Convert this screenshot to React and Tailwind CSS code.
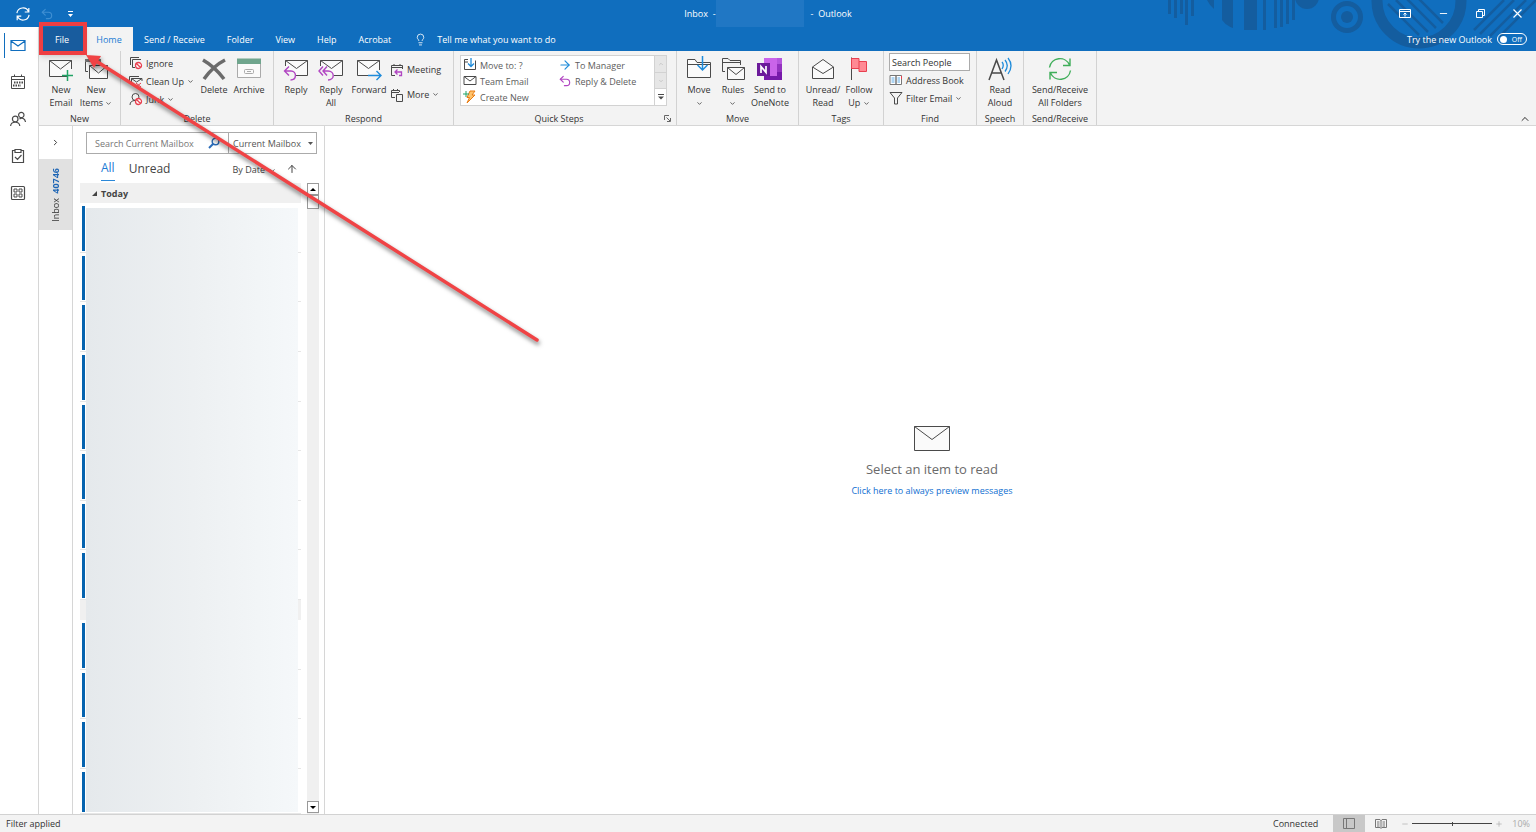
import { ArrowRight, ArrowUp, ChevronDown, ChevronRight, ChevronUp, Lightbulb, Minus, Plus, Undo2 } from 'lucide-react'

function Svg({ w, h, className = '', children }) {
  return (
    <svg width={w} height={h} viewBox={`0 0 ${w} ${h}`} fill="none" stroke="#4a4a4a" className={`shrink-0 ${className}`} aria-hidden="true">
      {children}
    </svg>
  )
}

function SyncIcon({ size, color, width = 1.3 }) {
  return (
    <svg width={size} height={size} viewBox="0 0 24 24" fill="none" stroke={color} strokeWidth={width} aria-hidden="true">
      <path d="M1.5 10.500A10.500 10.500 0 0 1 21.500 8M22 1.500V8.500H15M22.500 13.500A10.500 10.500 0 0 1 2.500 16M2 22.500V15.500H9" />
    </svg>
  )
}

const newEmailIcon = (
  <Svg w={26} h={26}>
    <path d="M19 20.500H1.500V4.500H23.500V13" fill="#fafafa" />
    <path d="M1.500 4.500L12.500 13L23.500 4.500" />
    <path d="M19.500 14V25M14 19.500H25" stroke="#21a366" strokeWidth="1.500" />
  </Svg>
)

const newItemsIcon = (
  <Svg w={26} h={26}>
    <path d="M5 15.500H2.500V3.500H17.500V9" />
    <path d="M2 3H18V6H2Z" fill="#777" stroke="none" />
    <path d="M6.500 9.500H24.500V22.500H6.500Z" fill="#fafafa" />
    <path d="M6.500 9.500L15.500 17L24.500 9.500" />
  </Svg>
)

const deleteIcon = (
  <Svg w={26} h={26}>
    <path d="M2 4C9 8 17 15 23 23M24 4C16 8 8 16 3 23" stroke="#6b6b6b" strokeWidth="3.500" />
  </Svg>
)

const archiveIcon = (
  <Svg w={26} h={26}>
    <path d="M1.500 8V21.500H24.500V8" fill="#fafafa" stroke="#aaa" />
    <path d="M1 2.500H25V8H1Z" fill="#6fa58d" stroke="none" />
    <rect x="8.500" y="13.500" width="9" height="4" rx="1" stroke="#aaa" />
    <path d="M11 15.500H15" stroke="#aaa" />
  </Svg>
)

const replyIcon = (
  <Svg w={26} h={26}>
    <path d="M2.500 10V4.500H24.500V19.500H13" fill="#fafafa" />
    <path d="M2.500 4.500L13.500 12.500L24.500 4.500" />
    <path d="M6 10.500L1.500 15L6 19.500M2 15H8C14 15 14 24 7.500 24" stroke="#b146c2" strokeWidth="1.400" />
  </Svg>
)

const replyAllIcon = (
  <Svg w={26} h={26}>
    <path d="M2.500 10V4.500H24.500V19.500H16" fill="#fafafa" />
    <path d="M2.500 4.500L13.500 12.500L24.500 4.500" />
    <path d="M5 10.500L1 15L5 19.500M9 10.500L5 15L9 19.500M5 15H10C17 15 17 24 10 24" stroke="#b146c2" strokeWidth="1.400" />
  </Svg>
)

const forwardIcon = (
  <Svg w={26} h={26}>
    <path d="M12 19.500H1.500V4.500H23.500V14" fill="#fafafa" />
    <path d="M1.500 4.500L12.500 12.500L23.500 4.500" />
    <path d="M12 19.500H25M20.500 15L25 19.500L20.500 24" stroke="#1e8bda" strokeWidth="1.400" />
  </Svg>
)

const moveIcon = (
  <Svg w={26} h={26}>
    <path d="M1.500 21.500V3.500H9L11 6.500H24.500V21.500H1.500ZM1.500 8.500H24" fill="#fafafa" />
    <path d="M16.500 0V14M11.500 9L16.500 14L21.500 9" stroke="#1e8bda" strokeWidth="1.500" />
  </Svg>
)

const rulesIcon = (
  <Svg w={26} h={26}>
    <path d="M5 15.500H2.500V2.500H8L10 4.500H20.500V9M2.500 6.500H20" />
    <path d="M7.500 11.500H24.500V23.500H7.500Z" fill="#fafafa" />
    <path d="M7.500 11.500L16 18.500L24.500 11.500" />
  </Svg>
)

const oneNoteIcon = (
  <Svg w={26} h={26}>
    <path d="M7 2H25V24H7Z" fill="#ca64ea" stroke="none" />
    <path d="M20 2H25V8H20Z" fill="#b556dd" stroke="none" />
    <path d="M20 8H25V16H20Z" fill="#9332bf" stroke="none" />
    <path d="M20 16H25V24H7V20H20Z" fill="#7719aa" stroke="none" />
    <path d="M0 7H13V20H0Z" fill="#6b1a9a" stroke="none" />
    <path d="M4 17V10.500L9 16.500V10" stroke="#fff" strokeWidth="1.700" />
  </Svg>
)

const unreadIcon = (
  <Svg w={26} h={26}>
    <path d="M2.500 11L13 3.500L23.500 11V22.500H2.500Z" fill="#fafafa" />
    <path d="M2.500 11L13 17.500L23.500 11" />
  </Svg>
)

const flagIcon = (
  <Svg w={26} h={26}>
    <path d="M5.500 24V1.500" />
    <path d="M5.500 2.500H13V5.500H20.500V15.500H13V12.500H5.500Z" fill="#ff8a94" stroke="#e8404f" />
    <path d="M13 5.500V12.500" stroke="#e8404f" />
  </Svg>
)

const readAloudIcon = (
  <Svg w={26} h={26}>
    <path d="M2 24L9.500 4L17 24M4.500 17H14.500" strokeWidth="1.500" />
    <path d="M15 6Q17.500 9 15 13M18 4Q22.500 9.500 18 15.500M21 2Q27 9.500 21 18" stroke="#1e8bda" strokeWidth="1.300" />
  </Svg>
)

const block = <path d="M12.500 9.500A3 3 0 1 1 6.500 9.500A3 3 0 1 1 12.500 9.500M7.500 7.500L11.500 11.500" stroke="#e8404f" strokeWidth="1.300" fill="#fff" />

const ignoreIcon = (
  <Svg w={14} h={14}>
    <path d="M6 11.500H3.500V3.500H12M1.500 9V1.500H10" />
    {block}
  </Svg>
)

const cleanUpIcon = (
  <Svg w={14} h={14}>
    <path d="M5 10.500H2.500V4.500H13V7M2.500 4.500L7.500 8L13 4.500M.5 8V2.500H10" />
    <path d="M7 9L12 13M12 9L7 13" stroke="#e8404f" />
  </Svg>
)

const junkIcon = (
  <Svg w={14} h={14}>
    <path d="M1 13C1 10 3 8.500 6 8.500M10 5A3.500 3.500 0 1 1 3 5A3.500 3.500 0 1 1 10 5" />
    {block}
  </Svg>
)

const meetingIcon = (
  <Svg w={14} h={14}>
    <path d="M5 12.500H1.500V2.500H12.500V6M1.500 4.500H12.500M4 1V3M10 1V3" />
    <path d="M7.500 6.500L5 9L7.500 11.500M5.500 9H11.500V12.500H9" stroke="#b146c2" strokeWidth="1.300" />
  </Svg>
)

const moreIcon = (
  <Svg w={14} h={14}>
    <path d="M5 9.500H1.500V2.500H9.500V4M1.500 4.500H9M3.500 1V3M7.500 1V3" />
    <path d="M6.500 6.500H12.500V13.500H6.500Z" />
  </Svg>
)

const smallMail = (
  <Svg w={14} h={12}>
    <path d="M1 1.500H13V9.500H1ZM1 1.500L7 6L13 1.500" />
  </Svg>
)

const smallMove = (
  <Svg w={14} h={14}>
    <path d="M5 1.500H1.500V11.500H12.500V2.500M1.500 4H5" />
    <path d="M8 0V8M5 5.500L8 8.500L11 5.500" stroke="#1e8bda" strokeWidth="1.300" />
  </Svg>
)

const createNewIcon = (
  <Svg w={14} h={14}>
    <path d="M7 1H12L9 5H12L4 13L6.500 7.500H4Z" fill="#ffc36b" stroke="#e87b13" />
    <path d="M3 1V7M0 4H6" stroke="#21a366" />
  </Svg>
)

const addressIcon = (
  <Svg w={14} h={14}>
    <path d="M1 2.500H7V11.500H1ZM7 2.500H12.500V11.500H7Z" fill="#fff" stroke="#777" />
    <path d="M2.500 5H5.500M2.500 7H5.500M2.500 9H5.500M8.500 5H11M8.500 7H11M8.500 9H11" stroke="#5aa9e6" />
    <path d="M12.500 3V6" stroke="#e8404f" />
  </Svg>
)

const filterIcon = (
  <Svg w={14} h={14}>
    <path d="M1 1.500H13L8.500 7V13H5.500V7Z" />
  </Svg>
)

const railItems = [
  {
    label: 'Mail',
    icon: (
      <Svg w={16} h={16}>
        <path d="M1 3.500H15V13.500H1ZM1 4L8 9L15 4" stroke="#106ebe" strokeWidth="1.200" />
      </Svg>
    ),
  },
  {
    label: 'Calendar',
    icon: (
      <Svg w={16} h={16}>
        <path d="M1.500 2.500H14.500V14.500H1.500ZM1.500 5.500H14.500M4.500 .5V3M11.500 .5V3" />
        <path d="M4 8.500H13M3 11.500H11" strokeWidth="2" strokeDasharray="1.500 1" />
      </Svg>
    ),
  },
  {
    label: 'People',
    icon: (
      <Svg w={16} h={16}>
        <path d="M8 8A2.800 2.800 0 1 1 2.400 8A2.800 2.800 0 1 1 8 8M.6 15C1 10 9.400 10 9.800 15M14 4A2.700 2.700 0 1 1 8.600 4A2.700 2.700 0 1 1 14 4M9.500 8C12 6 15 7.500 15.500 11" strokeWidth="1.200" />
      </Svg>
    ),
  },
  {
    label: 'Tasks',
    icon: (
      <Svg w={16} h={16}>
        <path d="M5 2.500H2.500V14.500H13.500V2.500H11M5 1.500H11V4.500H5ZM5 9L7.500 11.500L11.500 7" strokeWidth="1.200" />
      </Svg>
    ),
  },
  {
    label: 'More apps',
    icon: (
      <Svg w={16} h={16}>
        <rect x="1.500" y="1.500" width="13" height="13" rx="1" strokeWidth="1.200" />
        <path d="M4 4H7V7H4ZM9 4H12V7H9ZM4 9H7V12H4ZM9 9H12V12H9Z" />
      </Svg>
    ),
  },
]

const tabs = ['Send / Receive', 'Folder', 'View', 'Help', 'Acrobat']

function Chevron() {
  return <ChevronDown size={7} strokeWidth={2.5} className="inline-block shrink-0" />
}

function Group({ label, className, launcher, children }) {
  return (
    <section className={`flex shrink-0 flex-col border-r border-[#d2d2d2] ${className}`}>
      <div className="flex flex-1">{children}</div>
      <div className="flex h-[14px] items-center">
        <h2 className="flex-1 text-center">{label}</h2>
        {launcher}
      </div>
    </section>
  )
}

function BigButton({ icon, line1, line2, menu, className }) {
  return (
    <button className={`flex flex-col items-center gap-px pt-[5px] ${className}`}>
      {icon}
      <span className="whitespace-nowrap">
        {line1}
        <br />
        {line2} {menu && <Chevron />}
      </span>
    </button>
  )
}

function SmallButton({ icon, label, menu, className = 'h-[18px]' }) {
  return (
    <button className={`flex items-center gap-[3px] whitespace-nowrap ${className}`}>
      {icon}
      {label}
      {menu && <Chevron />}
    </button>
  )
}

function Ribbon() {
  return (
    <div className="flex h-[75px] border-b border-[#d6d6d6] bg-[#f3f3f3]">
      <Group label="New" className="w-[82px]">
        <BigButton icon={newEmailIcon} line1="New" line2="Email" className="ml-1 w-9" />
        <BigButton icon={newItemsIcon} line1="New" line2="Items" menu className="w-[34px]" />
      </Group>
      <Group label="Delete" className="w-[153px]">
        <div className="flex w-[76px] flex-col pt-[3px] pl-2">
          <SmallButton icon={ignoreIcon} label="Ignore" />
          <SmallButton icon={cleanUpIcon} label="Clean Up" menu />
          <SmallButton icon={junkIcon} label="Junk" menu />
        </div>
        <BigButton icon={deleteIcon} line1="Delete" className="w-[34px]" />
        <BigButton icon={archiveIcon} line1="Archive" className="w-9" />
      </Group>
      <Group label="Respond" className="w-[180px]">
        <BigButton icon={replyIcon} line1="Reply" className="ml-1 w-9" />
        <BigButton icon={replyAllIcon} line1="Reply" line2="All" className="w-[34px]" />
        <BigButton icon={forwardIcon} line1="Forward" className="w-[42px]" />
        <div className="flex flex-col pt-[6px]">
          <SmallButton icon={meetingIcon} label="Meeting" className="h-[25px]" />
          <SmallButton icon={moreIcon} label="More" menu className="h-[25px]" />
        </div>
      </Group>
      <Group
        label="Quick Steps"
        className="w-[223px]"
        launcher={
          <button aria-label="Quick Steps settings" className="w-3">
            <Svg w={7} h={7}>
              <path d="M.5 5V.5H5M2.500 2.500L6 6M6.500 3V6.500H3" stroke="#666" />
            </Svg>
          </button>
        }
      >
        <div className="mt-1 ml-[6px] flex h-[51px] w-[207px] border border-[#d2d2d2] bg-white text-[#5c5c5c]">
          <div className="flex w-[97px] flex-col pt-px pl-0.5">
            <SmallButton icon={smallMove} label="Move to: ?" className="h-4" />
            <SmallButton icon={smallMail} label="Team Email" className="h-4" />
            <SmallButton icon={createNewIcon} label="Create New" className="h-4" />
          </div>
          <div className="flex flex-1 flex-col pt-px">
            <SmallButton icon={<ArrowRight size={14} strokeWidth={2} color="#1e8bda" />} label="To Manager" className="h-4" />
            <SmallButton icon={<Undo2 size={14} strokeWidth={2} color="#b146c2" />} label="Reply & Delete" className="h-4" />
          </div>
          <div className="flex w-3 flex-col border-l border-[#d2d2d2]">
            <button aria-label="Scroll up" className="flex flex-1 items-center justify-center border-b border-[#d2d2d2] bg-[#e6e6e6] text-[#aaa]"><ChevronUp size={6} /></button>
            <button aria-label="Scroll down" className="flex flex-1 items-center justify-center border-b border-[#d2d2d2] bg-[#e6e6e6] text-[#aaa]"><ChevronDown size={6} /></button>
            <button aria-label="More steps" className="flex flex-1 items-center justify-center">
              <Svg w={6} h={6}><path d="M0 .5H6" /><path d="M0 2.500H6L3 5.500Z" fill="#4a4a4a" stroke="none" /></Svg>
            </button>
          </div>
        </div>
      </Group>
      <Group label="Move" className="w-[122px]">
        <BigButton icon={moveIcon} line1="Move" menu className="ml-[5px] w-[34px]" />
        <BigButton icon={rulesIcon} line1="Rules" menu className="w-[34px]" />
        <BigButton icon={oneNoteIcon} line1="Send to" line2="OneNote" className="w-10" />
      </Group>
      <Group label="Tags" className="w-[85px]">
        <BigButton icon={unreadIcon} line1="Unread/" line2="Read" className="ml-[5px] w-[38px]" />
        <BigButton icon={flagIcon} line1="Follow" line2="Up" menu className="w-[34px]" />
      </Group>
      <Group label="Find" className="w-[93px]">
        <div className="flex flex-1 flex-col pt-0.5 pr-[6px] pl-[5px]">
          <input aria-label="Search People" placeholder="Search People" className="h-[18px] w-full border border-[#ababab] bg-white px-0.5 placeholder:text-[#333]" />
          <SmallButton icon={addressIcon} label="Address Book" />
          <SmallButton icon={filterIcon} label="Filter Email" menu />
        </div>
      </Group>
      <Group label="Speech" className="w-[47px]">
        <BigButton icon={readAloudIcon} line1="Read" line2="Aloud" className="flex-1" />
      </Group>
      <Group label="Send/Receive" className="w-[73px]">
        <BigButton
          icon={<span className="flex h-[26px] items-center"><SyncIcon size={24} color="#3fae5a" width={1.4} /></span>}
          line1="Send/Receive"
          line2="All Folders"
          className="flex-1"
        />
      </Group>
      <button aria-label="Collapse ribbon" className="mr-[5px] ml-auto self-end"><ChevronUp size={12} /></button>
    </div>
  )
}

function HeaderArt({ className }) {
  const bars = [
    [0, 14], [6, 18], [12, 14], [17, 25], [23, 16],
    [106, 28], [112, 27], [118, 24], [124, 20],
  ]
  return (
    <svg width="380" height="51" viewBox="0 0 380 51" className={`absolute right-0 ${className}`} fill="#145d9f" stroke="#145d9f" aria-hidden="true">
      <g stroke="none">
        {bars.map(([x, h]) => <rect key={x} x={x + 12} y="0" width="3" height={h} />)}
        <path d="M51 0H58V9Q54 6 51 0ZM66 0H77V28Q70 26 66 20ZM88 0H101V30H88ZM107 0H110V30H107Z" />
        <circle cx="151" cy="-3" r="12" />
        <circle cx="191" cy="17" r="6" />
      </g>
      <circle cx="191" cy="17" r="13.500" fill="none" strokeWidth="5" />
      <circle cx="263" cy="1" r="42" fill="none" strokeWidth="11" />
      <path d="M232 4L263 35M240 0L272 32M250 -2L280 28M260 -4L287 23M318 30L348 0M324 34L358 0M334 36L370 0M344 36L380 0" strokeWidth="2.500" />
    </svg>
  )
}

function Header() {
  return (
    <div className="relative flex h-[27px] items-center overflow-hidden bg-[#106ebe] text-white">
      <HeaderArt className="top-0" />
      <div className="relative flex flex-1 items-center pl-4">
        <button aria-label="Send/Receive all"><SyncIcon size={14} color="#fff" width={2} /></button>
        <button aria-label="Undo" className="ml-[10px] text-[#3f8fd2]"><Undo2 size={14} /></button>
        <button aria-label="Customize toolbar" className="ml-[14px]">
          <svg width="5" height="6" fill="#fff" aria-hidden="true"><path d="M0 0H5V1H0ZM0 3H5L2.500 6Z" /></svg>
        </button>
      </div>
      <h1 className="relative flex items-center self-stretch pr-[3px] whitespace-pre">
        Inbox  -
        <span className="h-full w-[88px] bg-[#2077c4]" />
        <span className="pl-[7px]">-  Outlook</span>
      </h1>
      <div className="relative flex flex-1 items-center justify-end gap-[27px] pr-[13px]">
        <button aria-label="Ribbon display options">
          <Svg w={12} h={11}><path d="M.5 1.500H11.500V9.500H.5ZM.5 3.500H11.500M6 8.500V5M4.500 6.500L6 5L7.500 6.500" stroke="#fff" /></Svg>
        </button>
        <button aria-label="Minimize"><Minus size={11} /></button>
        <button aria-label="Restore">
          <Svg w={9} h={9}><path d="M.5 2.500H6.500V8.500H.5ZM2.500 2.500V.5H8.500V6.500H6.500" stroke="#fff" /></Svg>
        </button>
        <button aria-label="Close">
          <Svg w={11} h={11}><path d="M1.500 1.500L9.500 9.500M9.500 1.500L1.500 9.500" stroke="#fff" strokeWidth="1.200" /></Svg>
        </button>
      </div>
    </div>
  )
}

function TabRow() {
  return (
    <nav className="relative flex h-6 items-stretch bg-[#106ebe] text-white">
      {/* lower half of the header drawing, continues the one in the title bar */}
      <div className="absolute inset-y-0 right-0 w-[380px] overflow-hidden">
        <HeaderArt className="bottom-0" />
      </div>
      <button className="relative w-[46px] bg-[#185c9e]">
        File
        <span className="absolute -top-[5px] -right-0.5 -bottom-1 left-0 z-20 border-4 border-[#ee3e42] shadow-md" />
      </button>
      <button className="w-12 bg-[#f3f3f3] text-[#1b7bd4]">Home</button>
      <div className="flex gap-[22px] pl-[11px]">
        {tabs.map((tab) => <button key={tab}>{tab}</button>)}
      </div>
      <button className="ml-[23px] flex items-center gap-[10px]">
        <Lightbulb size={13} strokeWidth={1.5} />
        Tell me what you want to do
      </button>
      <label className="relative ml-auto flex items-center gap-[5px] pr-[9px]">
        Try the new Outlook
        <input type="checkbox" role="switch" className="peer sr-only" />
        <span className="flex h-3 w-[30px] items-center justify-between rounded-full border border-white pr-1 pl-0.5 text-[7px]">
          <i className="size-[7px] rounded-full bg-white" />
          Off
        </span>
      </label>
    </nav>
  )
}

function MailItem({ className = 'flex-[10]' }) {
  return (
    <li className={`flex border-b border-[#e6e6e6] pt-[3px] pb-px pl-0.5 ${className}`}>
      <span className="w-[3px] bg-[#0563af]" />
    </li>
  )
}

function MailList() {
  return (
    <div className="flex w-[252px] shrink-0 flex-col border-r border-[#d6d6d6] pt-[6px]">
      <form className="mr-[7px] ml-[13px] flex h-[22px] border border-[#ababab]">
        <input aria-label="Search Current Mailbox" placeholder="Search Current Mailbox" className="min-w-0 flex-1 pl-2 placeholder:text-[#777]" />
        <button aria-label="Search" className="px-2">
          <Svg w={12} h={12}>
            <circle cx="7.500" cy="4.500" r="3.300" stroke="#2b6cb8" strokeWidth="1.400" />
            <path d="M5 7L1 11" stroke="#2b6cb8" strokeWidth="2" />
          </Svg>
        </button>
        <select aria-label="Search scope" className="w-[88px] appearance-none border-l border-[#ababab] pl-1 text-[#555]">
          <option>Current Mailbox</option>
        </select>
        <svg width="5" height="3" className="mr-[3px] -ml-2 self-center" fill="#555" aria-hidden="true"><path d="M0 0H5L2.500 3Z" /></svg>
      </form>
      <div className="flex h-[29px] items-center pt-px pr-[26px] pl-7 text-xs text-[#444]">
        <button className="border-b border-[#2b88d8] pt-0.5 pb-1 leading-4 text-[#1b7bd4]">All</button>
        <button className="ml-[14px] pb-px">Unread</button>
        <button className="ml-auto flex items-center gap-1 pt-0.5 text-[9px]">By Date <Chevron /></button>
        <button aria-label="Sort order" className="ml-[10px]"><ArrowUp size={12} strokeWidth={2} /></button>
      </div>
      <div className="flex min-h-0 flex-1">
        <div className="ml-[7px] flex w-[221px] flex-col">
          <button className="flex h-5 items-center gap-1 bg-[#f0f0f0] pl-3 font-bold text-[#444]">
            <svg width="5" height="5" fill="#444" aria-hidden="true"><path d="M5 0V5H0Z" /></svg>
            Today
          </button>
          <div className="relative flex flex-1 flex-col">
            <ul className="flex flex-1 flex-col">
              {[1, 2, 3, 4, 5, 6, 7, 8].map((i) => <MailItem key={i} />)}
              <li className="h-5 bg-[#f0f0f0]" />
              {[9, 10, 11].map((i) => <MailItem key={i} />)}
              <MailItem className="flex-[9]" />
            </ul>
            <div className="absolute top-[5px] right-[3px] bottom-0.5 left-[6px] bg-linear-to-r from-[#e5e9ec] via-[#edf0f2] to-[#f5f8fa]" />
          </div>
        </div>
        <div className="ml-[6px] flex w-3 flex-col justify-between bg-[#f0f0f0]">
          <div>
            <button aria-label="Scroll up" className="flex h-3 w-full items-center justify-center border border-[#999] bg-white">
              <svg width="6" height="3" aria-hidden="true"><path d="M0 3H6L3 0Z" /></svg>
            </button>
            <div className="h-[14px] border border-[#999] bg-white" />
          </div>
          <button aria-label="Scroll down" className="mb-px flex h-3 w-full items-center justify-center border border-[#999] bg-white">
            <svg width="6" height="3" aria-hidden="true"><path d="M0 0H6L3 3Z" /></svg>
          </button>
        </div>
      </div>
    </div>
  )
}

function StatusBar() {
  return (
    <footer className="flex h-[18px] items-stretch border-t border-[#d2d2d2] bg-[#f3f3f3]">
      <span className="flex flex-1 items-center pl-[6px]">Filter applied</span>
      <span className="flex items-center pr-[15px]">Connected</span>
      <button aria-label="Normal view" className="flex w-8 items-center justify-center bg-[#c8c8c8]">
        <Svg w={12} h={11}><path d="M.5 .5H11.500V10.500H.5ZM3.500 .5V10.500" stroke="#777" /></Svg>
      </button>
      <button aria-label="Reading view" className="flex w-8 items-center justify-center">
        <Svg w={12} h={11}><path d="M.5 1.500H5L6 2.500L7 1.500H11.500V9.500H7L6 10.500L5 9.500H.5ZM6 2V10M2 4H4.500M2 6H4.500M2 8H4.500M7.500 4H10M7.500 6H10M7.500 8H10" stroke="#777" /></Svg>
      </button>
      <div className="flex items-center gap-[3px] pr-[6px] pl-1 text-[#aaa]">
        <button aria-label="Zoom out"><Minus size={8} /></button>
        <span className="relative flex h-1 w-20 items-center justify-center">
          <i className="absolute inset-x-0 h-px bg-[#444]" />
          <i className="h-1 w-px bg-[#444]" />
          <input type="range" aria-label="Zoom" className="absolute inset-0 w-full opacity-0" />
        </span>
        <button aria-label="Zoom in"><Plus size={8} /></button>
        <span className="pl-[6px]">10%</span>
      </div>
    </footer>
  )
}

export default function App() {
  return (
    <div className="relative flex min-h-screen flex-col overflow-hidden bg-white font-['Open_Sans',sans-serif] text-[9px] leading-[13px] text-[#333]">
      <Header />
      <div className="flex flex-1">
        <aside className="-mt-px w-[38px] shrink-0">
          {railItems.map((item, i) => (
            <button key={item.label} aria-label={item.label} className="relative flex h-[37px] w-9 items-center justify-center">
              {i === 0 && <span className="absolute top-[7px] left-1 h-[25px] w-px bg-[#106ebe]" />}
              {item.icon}
            </button>
          ))}
        </aside>
        <div className="flex min-w-0 flex-1 flex-col border-l border-[#d6d6d6]">
          <TabRow />
          <Ribbon />
          <div className="flex flex-1">
            <div className="flex w-[34px] shrink-0 flex-col border-r border-[#d6d6d6]">
              <button aria-label="Expand folder pane" className="flex h-[33px] items-center justify-center"><ChevronRight size={9} strokeWidth={2.5} /></button>
              <button className="flex h-[71px] items-center justify-center bg-[#e1e1e1]">
                <span className="rotate-180 [writing-mode:vertical-rl]">
                  Inbox <b className="pt-0.5 text-[#1f66b5]">40746</b>
                </span>
              </button>
            </div>
            <MailList />
            <main className="flex flex-1 flex-col items-center justify-center pb-[18px] pl-[3px]">
              <Svg w={36} h={26}>
                <path d="M.5 .5H35.500V24.500H.5Z" fill="#fafafa" />
                <path d="M.5 .5L18 13.500L35.500 .5" />
              </Svg>
              <p className="mt-2 text-[13px] leading-[18px] text-[#6a6a6a]">Select an item to read</p>
              <a href="#preview" className="mt-[6px] text-[#0f6fd1]">Click here to always preview messages</a>
            </main>
          </div>
        </div>
      </div>
      <StatusBar />
      <svg width="560" height="360" className="pointer-events-none absolute top-0 left-0 z-30 drop-shadow-[1px_3px_2px_rgba(0,0,0,0.5)]" aria-hidden="true">
        <path d="M537 340L96 61" stroke="#f04345" strokeWidth="3.500" strokeLinecap="round" />
        <path d="M86 55L101 56L94 68Z" fill="#f04345" />
      </svg>
    </div>
  )
}
